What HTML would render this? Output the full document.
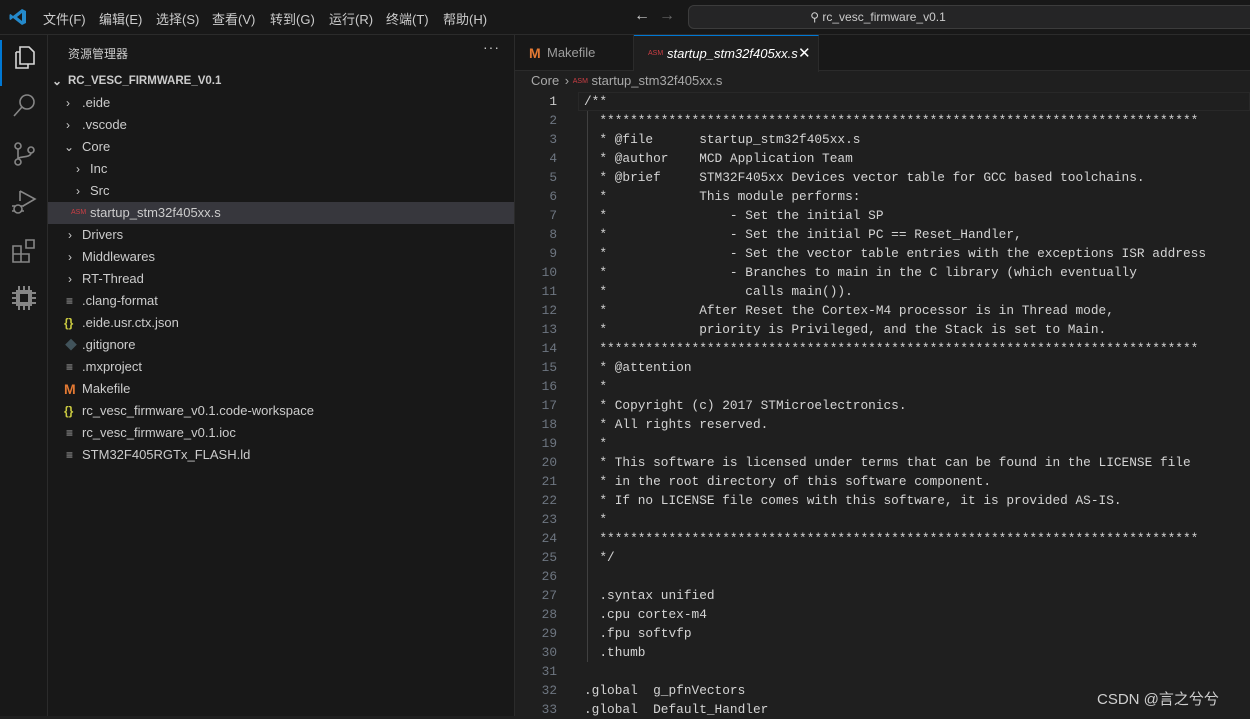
<!DOCTYPE html>
<html><head><meta charset="utf-8"><style>
*{margin:0;padding:0;box-sizing:border-box}
body{width:1250px;height:716px;overflow:hidden;background:#1f1f1f;font-family:"Liberation Sans","Noto Sans CJK SC",sans-serif;color:#ccc;position:relative}
.title{position:absolute;left:0;top:0;width:1250px;height:35px;background:#181818;border-bottom:1px solid #2b2b2b}
.menu{position:absolute;top:9px;font-size:13px;color:#ccc}
.search{position:absolute;left:688px;top:5px;width:570px;height:24px;border:1px solid #3c3c3c;border-radius:6px;background:#252526;font-size:12px;color:#ccc;text-align:center;line-height:22px;padding-right:190px}
.act{position:absolute;left:0;top:35px;width:48px;height:681px;background:#181818;border-right:1px solid #2b2b2b}
.side{position:absolute;left:48px;top:35px;width:467px;height:681px;background:#181818;border-right:1px solid #2b2b2b}
.row{position:absolute;left:0;width:466px;height:22px;font-size:13px;line-height:22px;color:#ccc;white-space:nowrap}
.chev{position:absolute;font-size:12px;color:#ccc}
.tabs{position:absolute;left:515px;top:35px;width:735px;height:36px;background:#181818;border-bottom:1px solid #2b2b2b}
.code{position:absolute;left:515px;top:92px;width:735px;font-family:"Liberation Mono",monospace;font-size:12.8px}
.ln{position:absolute;left:0;width:42px;text-align:right;color:#6e7681;height:19px;line-height:19px}
.tx{position:absolute;left:69px;white-space:pre;color:#d4d4d4;height:19px;line-height:19px}
</style></head><body>
<div class="title">
<svg style="position:absolute;left:9px;top:8px" width="18" height="18" viewBox="0 0 18 18"><path d="M13 1 L17 3 V15 L13 17 L4 10 L1.5 12 L0.5 11.3 V6.7 L1.5 6 L4 8 Z M13 5 L8 9 L13 13 Z" fill="#2489ca"/></svg>
<span class="menu" style="left:43px">文件(F)</span><span class="menu" style="left:99px">编辑(E)</span><span class="menu" style="left:156px">选择(S)</span><span class="menu" style="left:212px">查看(V)</span><span class="menu" style="left:270px">转到(G)</span><span class="menu" style="left:329px">运行(R)</span><span class="menu" style="left:386px">终端(T)</span><span class="menu" style="left:443px">帮助(H)</span>
<span style="position:absolute;left:634px;top:7px;font-size:16px;color:#ccc">←</span><span style="position:absolute;left:659px;top:7px;font-size:16px;color:#666">→</span>
<div class="search">⚲ rc_vesc_firmware_v0.1</div>
</div>
<div class="act">
<div style="position:absolute;left:0;top:5px;width:2px;height:46px;background:#0078d4"></div>
<svg style="position:absolute;left:12px;top:10px" width="24" height="26" fill="none" stroke="#d7d7d7" stroke-width="1.6"><path d="M8 2h9l5 5v12H8z M4 7h4 M4 7v16h12v-4"/></svg>
<svg style="position:absolute;left:12px;top:58px" width="24" height="26" fill="none" stroke="#868686" stroke-width="1.6"><circle cx="15" cy="9" r="7"/><path d="M10 14 2 23"/></svg>
<svg style="position:absolute;left:12px;top:106px" width="24" height="26" fill="none" stroke="#868686" stroke-width="1.6"><circle cx="6" cy="5" r="3"/><circle cx="6" cy="21" r="3"/><circle cx="19" cy="9" r="3"/><path d="M6 8v10 M19 12c0 5-13 3-13 6"/></svg>
<svg style="position:absolute;left:10px;top:154px" width="28" height="28" fill="none" stroke="#868686" stroke-width="1.6"><path d="M10 2v10 M10 2l15 8-12 7"/><circle cx="8" cy="20" r="4"/><path d="M2 17h3 M2 22h3 M11 17h3 M11 22h3"/></svg>
<svg style="position:absolute;left:11px;top:203px" width="26" height="26" fill="none" stroke="#868686" stroke-width="1.6"><path d="M2 8h8v8h8v8H2z M2 16h8v8 M15 2h8v8h-8z"/></svg>
<svg style="position:absolute;left:11px;top:250px" width="26" height="26" fill="#868686"><rect x="5" y="5" width="16" height="16"/><rect x="9" y="9" width="8" height="8" fill="#181818"/><path d="M7 1h2v4H7zM12 1h2v4h-2zM17 1h2v4h-2zM7 21h2v4H7zM12 21h2v4h-2zM17 21h2v4h-2zM1 7h4v2H1zM1 12h4v2H1zM1 17h4v2H1zM21 7h4v2h-4zM21 12h4v2h-4zM21 17h4v2h-4z"/></svg>
</div>
<div class="side">
<div style="position:absolute;left:20px;top:10px;font-size:12px">资源管理器</div>
<div style="position:absolute;left:435px;top:4px;font-size:14px;letter-spacing:1px">···</div>
<div class="row" style="top:35px;font-weight:bold;font-size:11.5px"><span class="chev" style="left:4px">⌄</span><span style="position:absolute;left:20px">RC_VESC_FIRMWARE_V0.1</span></div>
<div class="row" style="top:57px"><span class="chev" style="left:18px">›</span><span style="position:absolute;left:34px">.eide</span></div>
<div class="row" style="top:79px"><span class="chev" style="left:18px">›</span><span style="position:absolute;left:34px">.vscode</span></div>
<div class="row" style="top:101px"><span class="chev" style="left:16px">⌄</span><span style="position:absolute;left:34px">Core</span></div>
<div class="row" style="top:123px"><span class="chev" style="left:28px">›</span><span style="position:absolute;left:42px">Inc</span></div>
<div class="row" style="top:145px"><span class="chev" style="left:28px">›</span><span style="position:absolute;left:42px">Src</span></div>
<div class="row" style="top:167px;background:#37373d"><span style="position:absolute;left:23px;font-size:7px;color:#cc3e44;top:0">ASM</span><span style="position:absolute;left:42px">startup_stm32f405xx.s</span></div>
<div class="row" style="top:189px"><span class="chev" style="left:20px">›</span><span style="position:absolute;left:34px">Drivers</span></div>
<div class="row" style="top:211px"><span class="chev" style="left:20px">›</span><span style="position:absolute;left:34px">Middlewares</span></div>
<div class="row" style="top:233px"><span class="chev" style="left:20px">›</span><span style="position:absolute;left:34px">RT-Thread</span></div>
<div class="row" style="top:255px"><span class="chev" style="left:18px;color:#aaa">≡</span><span style="position:absolute;left:34px">.clang-format</span></div>
<div class="row" style="top:277px"><span class="chev" style="left:16px;color:#cbcb41;font-weight:bold">{}</span><span style="position:absolute;left:34px">.eide.usr.ctx.json</span></div>
<div class="row" style="top:299px"><span class="chev" style="left:17px;color:#41535b">◆</span><span style="position:absolute;left:34px">.gitignore</span></div>
<div class="row" style="top:321px"><span class="chev" style="left:18px;color:#aaa">≡</span><span style="position:absolute;left:34px">.mxproject</span></div>
<div class="row" style="top:343px"><span class="chev" style="left:16px;color:#e37933;font-weight:bold;font-size:14px">M</span><span style="position:absolute;left:34px">Makefile</span></div>
<div class="row" style="top:365px"><span class="chev" style="left:16px;color:#cbcb41;font-weight:bold">{}</span><span style="position:absolute;left:34px">rc_vesc_firmware_v0.1.code-workspace</span></div>
<div class="row" style="top:387px"><span class="chev" style="left:18px;color:#aaa">≡</span><span style="position:absolute;left:34px">rc_vesc_firmware_v0.1.ioc</span></div>
<div class="row" style="top:409px"><span class="chev" style="left:18px;color:#aaa">≡</span><span style="position:absolute;left:34px">STM32F405RGTx_FLASH.ld</span></div>
</div>
<div class="tabs">
<div style="position:absolute;left:0;top:0;width:119px;height:36px;border-right:1px solid #2b2b2b;font-size:13px;line-height:36px;color:#9d9d9d"><span style="position:absolute;left:14px;color:#e37933;font-weight:bold;font-size:14px">M</span><span style="position:absolute;left:32px">Makefile</span></div>
<div style="position:absolute;left:119px;top:0;width:185px;height:37px;background:#1f1f1f;border-top:1px solid #0078d4;border-right:1px solid #2b2b2b;font-size:13px;line-height:35px;color:#fff;font-style:italic"><span style="position:absolute;left:14px;font-size:7px;color:#cc3e44;font-style:normal">ASM</span><span style="position:absolute;left:33px">startup_stm32f405xx.s</span><span style="position:absolute;left:164px;font-style:normal;font-size:15px">✕</span></div>
</div>
<div style="position:absolute;left:531px;top:73px;font-size:13px;color:#a9a9a9">Core <span style="margin-left:2px">›</span> <span style="font-size:7px;color:#cc3e44;vertical-align:2px">ASM</span> startup_stm32f405xx.s</div>
<div style="position:absolute;left:578px;top:92px;width:672px;height:19px;border:1px solid #282828"></div>
<div style="position:absolute;left:587px;top:111px;width:1px;height:551px;background:#404040"></div>
<div class="code">
<div class="ln" style="top:0;color:#ccc">1</div><div class="tx" style="top:0">/**</div>
<div class="ln" style="top:19px">2</div><div class="tx" style="top:19px">  ******************************************************************************</div>
<div class="ln" style="top:38px">3</div><div class="tx" style="top:38px">  * @file      startup_stm32f405xx.s</div>
<div class="ln" style="top:57px">4</div><div class="tx" style="top:57px">  * @author    MCD Application Team</div>
<div class="ln" style="top:76px">5</div><div class="tx" style="top:76px">  * @brief     STM32F405xx Devices vector table for GCC based toolchains.</div>
<div class="ln" style="top:95px">6</div><div class="tx" style="top:95px">  *            This module performs:</div>
<div class="ln" style="top:114px">7</div><div class="tx" style="top:114px">  *                - Set the initial SP</div>
<div class="ln" style="top:133px">8</div><div class="tx" style="top:133px">  *                - Set the initial PC == Reset_Handler,</div>
<div class="ln" style="top:152px">9</div><div class="tx" style="top:152px">  *                - Set the vector table entries with the exceptions ISR address</div>
<div class="ln" style="top:171px">10</div><div class="tx" style="top:171px">  *                - Branches to main in the C library (which eventually</div>
<div class="ln" style="top:190px">11</div><div class="tx" style="top:190px">  *                  calls main()).</div>
<div class="ln" style="top:209px">12</div><div class="tx" style="top:209px">  *            After Reset the Cortex-M4 processor is in Thread mode,</div>
<div class="ln" style="top:228px">13</div><div class="tx" style="top:228px">  *            priority is Privileged, and the Stack is set to Main.</div>
<div class="ln" style="top:247px">14</div><div class="tx" style="top:247px">  ******************************************************************************</div>
<div class="ln" style="top:266px">15</div><div class="tx" style="top:266px">  * @attention</div>
<div class="ln" style="top:285px">16</div><div class="tx" style="top:285px">  *</div>
<div class="ln" style="top:304px">17</div><div class="tx" style="top:304px">  * Copyright (c) 2017 STMicroelectronics.</div>
<div class="ln" style="top:323px">18</div><div class="tx" style="top:323px">  * All rights reserved.</div>
<div class="ln" style="top:342px">19</div><div class="tx" style="top:342px">  *</div>
<div class="ln" style="top:361px">20</div><div class="tx" style="top:361px">  * This software is licensed under terms that can be found in the LICENSE file</div>
<div class="ln" style="top:380px">21</div><div class="tx" style="top:380px">  * in the root directory of this software component.</div>
<div class="ln" style="top:399px">22</div><div class="tx" style="top:399px">  * If no LICENSE file comes with this software, it is provided AS-IS.</div>
<div class="ln" style="top:418px">23</div><div class="tx" style="top:418px">  *</div>
<div class="ln" style="top:437px">24</div><div class="tx" style="top:437px">  ******************************************************************************</div>
<div class="ln" style="top:456px">25</div><div class="tx" style="top:456px">  */</div>
<div class="ln" style="top:475px">26</div>
<div class="ln" style="top:494px">27</div><div class="tx" style="top:494px">  .syntax unified</div>
<div class="ln" style="top:513px">28</div><div class="tx" style="top:513px">  .cpu cortex-m4</div>
<div class="ln" style="top:532px">29</div><div class="tx" style="top:532px">  .fpu softvfp</div>
<div class="ln" style="top:551px">30</div><div class="tx" style="top:551px">  .thumb</div>
<div class="ln" style="top:570px">31</div>
<div class="ln" style="top:589px">32</div><div class="tx" style="top:589px">.global  g_pfnVectors</div>
<div class="ln" style="top:608px">33</div><div class="tx" style="top:608px">.global  Default_Handler</div>
</div>
<div style="position:absolute;left:1097px;top:688px;font-size:15px;color:#cfcfcf">CSDN @言之兮兮</div>
</body></html>
